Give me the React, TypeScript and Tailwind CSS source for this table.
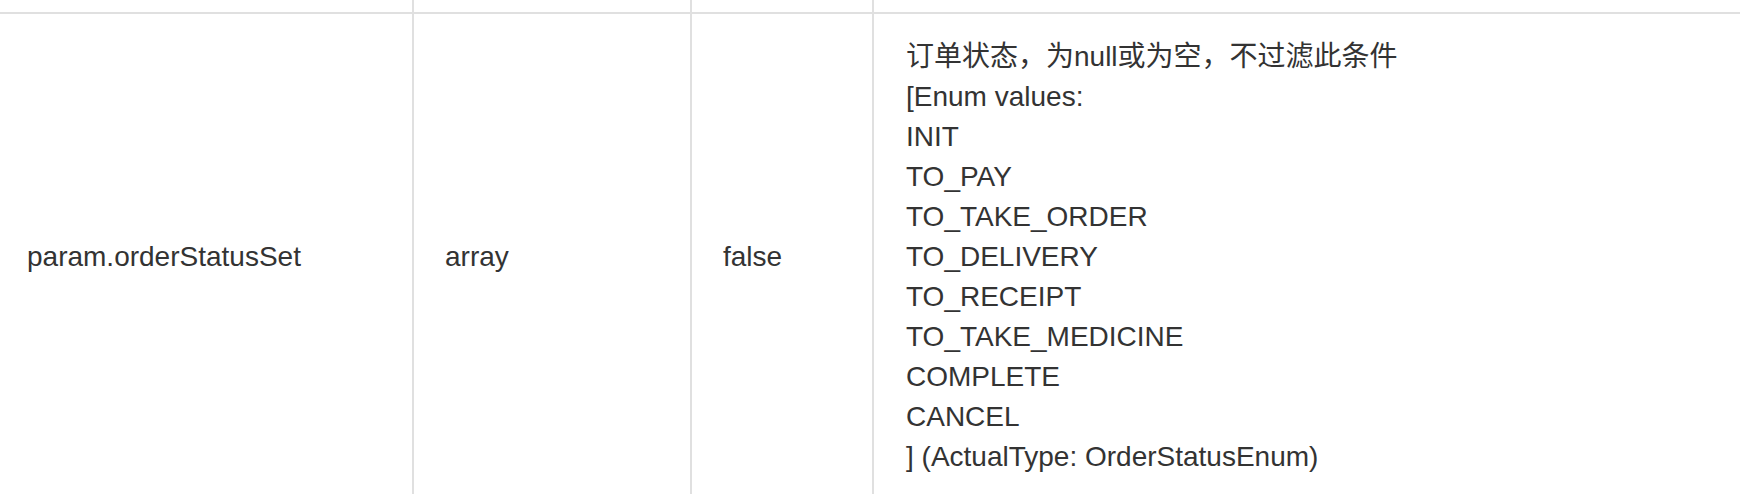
import React from "react";

const enumLines = [
  "订单状态，为null或为空，不过滤此条件",
  "[Enum values:",
  "INIT",
  "TO_PAY",
  "TO_TAKE_ORDER",
  "TO_DELIVERY",
  "TO_RECEIPT",
  "TO_TAKE_MEDICINE",
  "COMPLETE",
  "CANCEL",
  "] (ActualType: OrderStatusEnum)",
];

export default function App() {
  return (
    <div
      className="w-[1740px] h-[496px] overflow-hidden bg-white text-[#333333] text-[28px] leading-[40px]"
      style={{ fontFamily: '"Liberation Sans", "Noto Sans CJK SC", sans-serif' }}
    >
      {/* tail of previous row */}
      <div className="flex h-[14px] border-b-2 border-[#e0e0e0]">
        <div className="w-[414px] shrink-0 border-r-2 border-[#e0e0e0]" />
        <div className="w-[278px] shrink-0 border-r-2 border-[#e0e0e0]" />
        <div className="w-[182px] shrink-0 border-r-2 border-[#e0e0e0]" />
        <div className="flex-1" />
      </div>
      {/* current row */}
      <div className="flex">
        <div className="w-[414px] shrink-0 border-r-2 border-[#e0e0e0] pl-[27px] pt-[6px] flex items-center">
          param.orderStatusSet
        </div>
        <div className="w-[278px] shrink-0 border-r-2 border-[#e0e0e0] pl-[31px] pt-[6px] flex items-center">
          array
        </div>
        <div className="w-[182px] shrink-0 border-r-2 border-[#e0e0e0] pl-[31px] pt-[6px] flex items-center">
          false
        </div>
        <div className="flex-1 pl-[32px] pt-[23px] pb-[17px]">
          {enumLines.map((l) => (
            <div key={l}>{l}</div>
          ))}
        </div>
      </div>
    </div>
  );
}
